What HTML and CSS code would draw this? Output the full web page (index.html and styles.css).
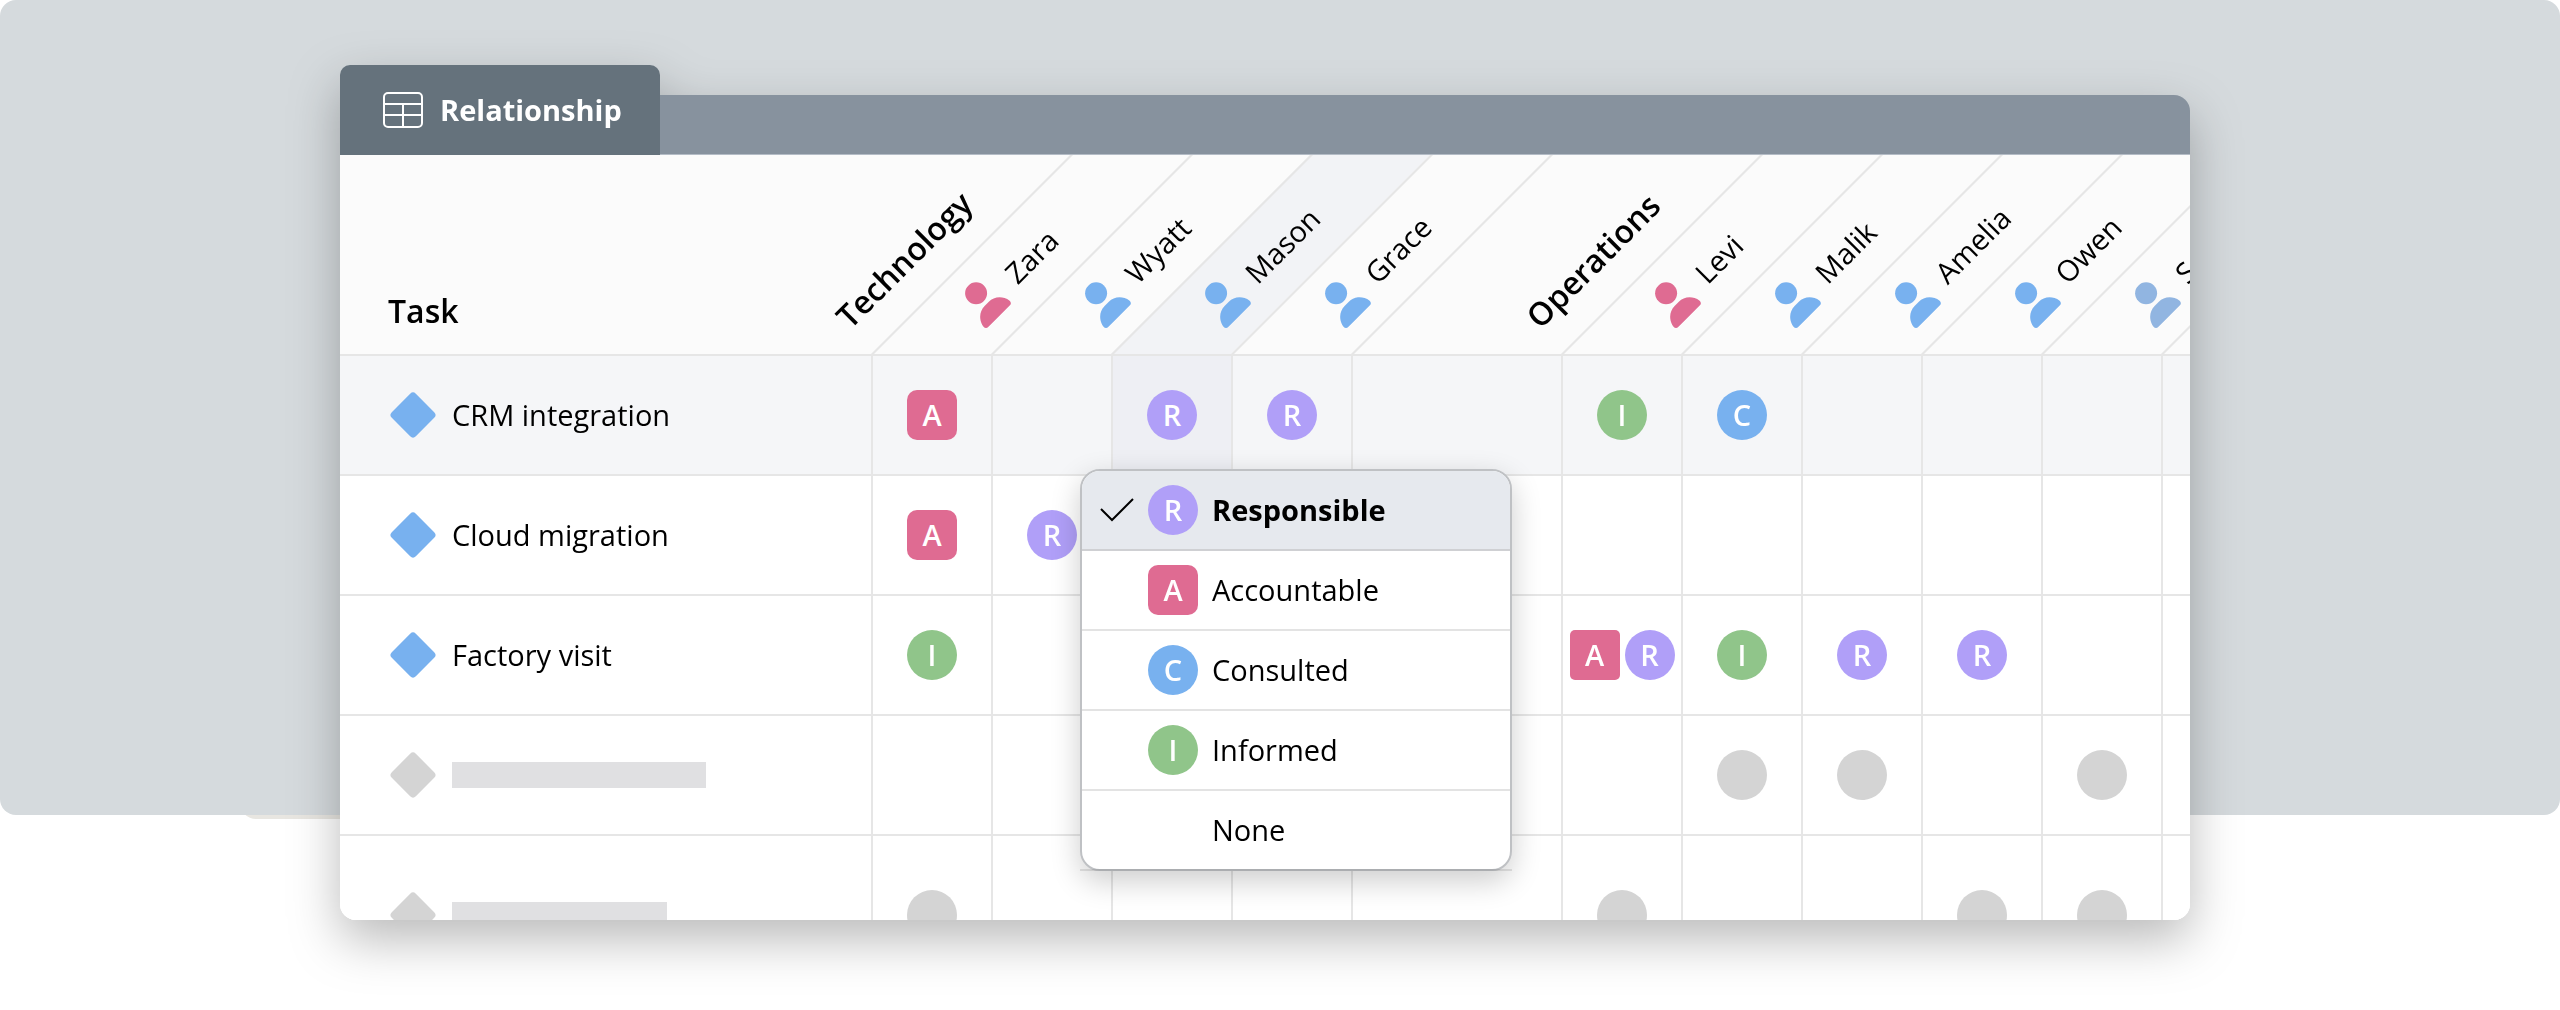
FILE: index.html
```html
<!DOCTYPE html>
<html lang="en">
<head>
  <meta charset="UTF-8" />
  <meta name="viewport" content="width=device-width, initial-scale=1" />
  <title>Relationship</title>
  <link rel="stylesheet" href="styles.css">
</head>
<body>
  <!-- shared person icon -->
  <svg class="defs" aria-hidden="true">
    <symbol id="person" viewBox="0 0 38 44">
      <circle cx="19" cy="11" r="11" />
      <path d="M4 43.500C1.500 43.500 .5 42 .5 40C2 31 9 26 16 26H22C29 26 36 31 37.500 40C37.500 42 36.500 43.500 34 43.500Z" />
    </symbol>
  </svg>

  <main class="hero">
    <div class="window">
      <div class="titlebar">
        <div class="tab">
          <svg class="tab-icon" viewBox="0 0 40 36" fill="none" stroke="#fff" stroke-width="2">
            <rect x="1" y="1" width="38" height="34" rx="4" />
            <path d="M1 12H39M1 23H39M20 12V35" />
          </svg>
          Relationship
        </div>
        <div class="bar"></div>
      </div>

      <div class="panel">
        <table class="matrix">
          <colgroup>
            <col class="col-task"><col class="col-group">
            <col class="col-person"><col class="col-person"><col class="col-person"><col class="col-person">
            <col class="col-group">
            <col class="col-person"><col class="col-person"><col class="col-person"><col class="col-person"><col class="col-person">
            <col>
          </colgroup>
          <thead>
            <tr>
              <th class="task">Task</th>
              <th><div class="group">Technology</div></th>
              <th class="slant"><div class="person pink"><svg><use href="#person" /></svg>Zara</div></th>
              <th class="slant"><div class="person"><svg><use href="#person" /></svg>Wyatt</div></th>
              <th class="slant active"><div class="person"><svg><use href="#person" /></svg>Mason</div></th>
              <th class="slant"><div class="person"><svg><use href="#person" /></svg>Grace</div></th>
              <th class="slant"><div class="group">Operations</div></th>
              <th class="slant"><div class="person pink"><svg><use href="#person" /></svg>Levi</div></th>
              <th class="slant"><div class="person"><svg><use href="#person" /></svg>Malik</div></th>
              <th class="slant"><div class="person"><svg><use href="#person" /></svg>Amelia</div></th>
              <th class="slant"><div class="person"><svg><use href="#person" /></svg>Owen</div></th>
              <th class="slant"><div class="person muted"><svg><use href="#person" /></svg>S</div></th>
              <th class="slant"></th>
            </tr>
          </thead>
          <tbody>
            <tr class="selected">
              <th colspan="2"><div class="name"><i class="diamond"></i>CRM integration</div></th>
              <td><div class="cell"><span class="badge a">A</span></div></td>
              <td></td>
              <td class="active">
                <div class="cell"><span class="badge r">R</span></div>
                <div class="menu" role="menu">
                  <button class="option checked" role="menuitemradio" aria-checked="true">
                    <svg class="check" viewBox="0 0 34 24" fill="none" stroke="#000" stroke-width="2"><path d="M1 11L12 22L33 1" /></svg>
                    <span class="badge r">R</span>Responsible
                  </button>
                  <button class="option" role="menuitemradio" aria-checked="false"><span class="badge a">A</span>Accountable</button>
                  <button class="option" role="menuitemradio" aria-checked="false"><span class="badge c">C</span>Consulted</button>
                  <button class="option" role="menuitemradio" aria-checked="false"><span class="badge i">I</span>Informed</button>
                  <button class="option" role="menuitemradio" aria-checked="false"><span class="badge none"></span>None</button>
                </div>
              </td>
              <td><div class="cell"><span class="badge r">R</span></div></td>
              <td></td>
              <td><div class="cell"><span class="badge i">I</span></div></td>
              <td><div class="cell"><span class="badge c">C</span></div></td>
              <td></td><td></td><td></td><td></td>
            </tr>
            <tr>
              <th colspan="2"><div class="name"><i class="diamond"></i>Cloud migration</div></th>
              <td><div class="cell"><span class="badge a">A</span></div></td>
              <td><div class="cell"><span class="badge r">R</span></div></td>
              <td></td><td></td><td></td><td></td><td></td><td></td><td></td><td></td><td></td>
            </tr>
            <tr>
              <th colspan="2"><div class="name"><i class="diamond"></i>Factory visit</div></th>
              <td><div class="cell"><span class="badge i">I</span></div></td>
              <td></td><td></td><td></td><td></td>
              <td><div class="cell pair"><span class="badge a">A</span><span class="badge r">R</span></div></td>
              <td><div class="cell"><span class="badge i">I</span></div></td>
              <td><div class="cell"><span class="badge r">R</span></div></td>
              <td><div class="cell"><span class="badge r">R</span></div></td>
              <td></td><td></td>
            </tr>
            <tr>
              <th colspan="2"><div class="name"><i class="diamond gray"></i><span class="line"></span></div></th>
              <td></td><td></td><td></td><td></td><td></td><td></td>
              <td><div class="cell"><span class="badge gray"></span></div></td>
              <td><div class="cell"><span class="badge gray"></span></div></td>
              <td></td>
              <td><div class="cell"><span class="badge gray"></span></div></td>
              <td></td>
            </tr>
            <tr class="last">
              <th colspan="2"><div class="name"><i class="diamond gray"></i><span class="line short"></span></div></th>
              <td><div class="cell"><span class="badge gray"></span></div></td>
              <td></td><td></td><td></td><td></td>
              <td><div class="cell"><span class="badge gray"></span></div></td>
              <td></td><td></td>
              <td><div class="cell"><span class="badge gray"></span></div></td>
              <td><div class="cell"><span class="badge gray"></span></div></td>
              <td></td>
            </tr>
          </tbody>
        </table>
      </div>
    </div>
  </main>
</body>
</html>
```

FILE: styles.css
```css
* {
  box-sizing: border-box;
}
body {
  margin: 0;
  background: #fff;
  color: #000;
  font-family: "Open Sans", "Noto Sans", sans-serif;
  font-size: 29px;
  line-height: 40px;
}
.defs {
  position: absolute;
  width: 0;
  height: 0;
}
.hero {
  position: relative;
  isolation: isolate;
  padding: 65px 370px 90px 340px;
}
/* the backdrop ends before the window does */
.hero::before {
  content: "";
  position: absolute;
  inset: 0 0 auto 0;
  z-index: -1;
  height: 815px;
  background: #d5dadd;
  border-radius: 16px;
}
/* thin beige edge under the backdrop */
.hero::after {
  content: "";
  position: absolute;
  top: 779px;
  left: 240px;
  z-index: -2;
  width: 400px;
  height: 40px;
  background: #e8e6e1;
  border-radius: 16px;
}
.window {
  filter: drop-shadow(0 20px 25px rgba(0, 0, 0, 0.27));
}

/* title bar */
.titlebar {
  display: flex;
  align-items: flex-end;
}
.tab {
  display: flex;
  align-items: center;
  gap: 17px;
  height: 90px;
  padding: 0 38px 0 43px;
  background: #65727c;
  border-radius: 10px 10px 0 0;
  color: #fff;
  font-weight: 700;
}
.tab-icon {
  width: 40px;
  height: 36px;
}
.bar {
  flex: 1;
  height: 60px;
  background: #87929e;
  border-bottom: 1px solid #b4bcc6;
  border-radius: 0 16px 0 0;
}

/* matrix */
.panel {
  max-height: 765px;
  overflow: hidden;
  background: #fff;
  border-radius: 0 0 16px 16px;
}
.matrix {
  width: 100%;
  table-layout: fixed;
  border-collapse: separate;
  border-spacing: 0;
  background: #fbfbfb;
  isolation: isolate;
}
.col-task {
  width: 321px;
}
.col-group {
  width: 210px;
}
.col-person {
  width: 120px;
}
th, td {
  position: relative;
  padding: 0;
  border-bottom: 2px solid #e6e6e6;
  text-align: left;
  font-weight: 400;
  white-space: nowrap;
}
td {
  border-left: 2px solid #e6e6e6;
}
thead th {
  height: 201px;
  vertical-align: bottom;
}
thead .task {
  padding: 0 0 23px 48px;
  font-size: 32px;
  font-weight: 600;
}
.slant::before {
  content: "";
  position: absolute;
  inset: 0;
  z-index: -1;
  border-left: 3px solid #e6e6e6;
  transform: skewX(-45deg);
  transform-origin: 0 100%;
}
.slant.active::before {
  background: #f2f3f6;
}
.person, .group {
  display: flex;
  width: 0;
  transform: rotate(-45deg);
  transform-origin: 0 100%;
}
.person {
  align-items: flex-end;
  gap: 16px;
  margin: 0 0 24px 115px;
}
.person svg {
  flex: none;
  width: 38px;
  height: 44px;
  fill: #78b1ef;
}
.person.pink svg {
  fill: #df6b92;
}
.person.muted svg {
  fill: #91b5e1;
}
.group {
  margin: 0 0 18px 195px;
  font-size: 32px;
  font-weight: 600;
}

/* rows */
tbody tr {
  height: 120px;
  background: #fff;
}
tbody .selected {
  background: #f5f6f8;
}
tbody .last {
  height: 160px;
}
td.active {
  background: #eeeff4;
}
.name {
  display: flex;
  align-items: center;
  gap: 22px;
  padding-left: 56px;
}
.diamond {
  width: 34px;
  height: 34px;
  background: #78b1ef;
  border-radius: 4px;
  transform: rotate(45deg);
}
.line {
  width: 254px;
  height: 26px;
  background: #e0e0e2;
}
.line.short {
  width: 215px;
}
.cell {
  display: flex;
  justify-content: center;
  gap: 5px;
}
.badge {
  flex: none;
  width: 50px;
  height: 50px;
  border-radius: 50%;
  color: #fff;
  font-weight: 600;
  line-height: 50px;
  text-align: center;
}
.a {
  background: #df6b92;
  border-radius: 10px;
}
.pair .a {
  border-radius: 5px;
}
.r {
  background: #b09ff8;
}
.c {
  background: #78b1ef;
}
.i {
  background: #90c58a;
}
.gray {
  background: #d4d4d4;
}

/* role menu */
.menu {
  position: absolute;
  top: 113px;
  left: -33px;
  z-index: 1;
  width: 432px;
  background: #fff;
  border: 2px solid #bfc1c4;
  border-radius: 20px;
  box-shadow: 0 10px 30px rgba(0, 0, 0, 0.2);
}
.menu::after {
  content: "";
  position: absolute;
  inset: auto -2px -2px -2px;
  height: 2px;
  background: rgba(0, 0, 0, 0.1);
}
.option {
  display: flex;
  align-items: center;
  gap: 14px;
  width: 100%;
  height: 80px;
  padding: 0 18px 0 66px;
  background: none;
  border: 0;
  border-bottom: 2px solid #e3e3e3;
  color: #000;
  font: inherit;
}
.option:last-child {
  height: 78px;
  border-bottom: 0;
}
.option.checked {
  padding-left: 18px;
  background: #e6e9ee;
  border-bottom-color: #cfd0d3;
  border-radius: 18px 18px 0 0;
  font-weight: 700;
}
.check {
  width: 34px;
  height: 24px;
}
```
